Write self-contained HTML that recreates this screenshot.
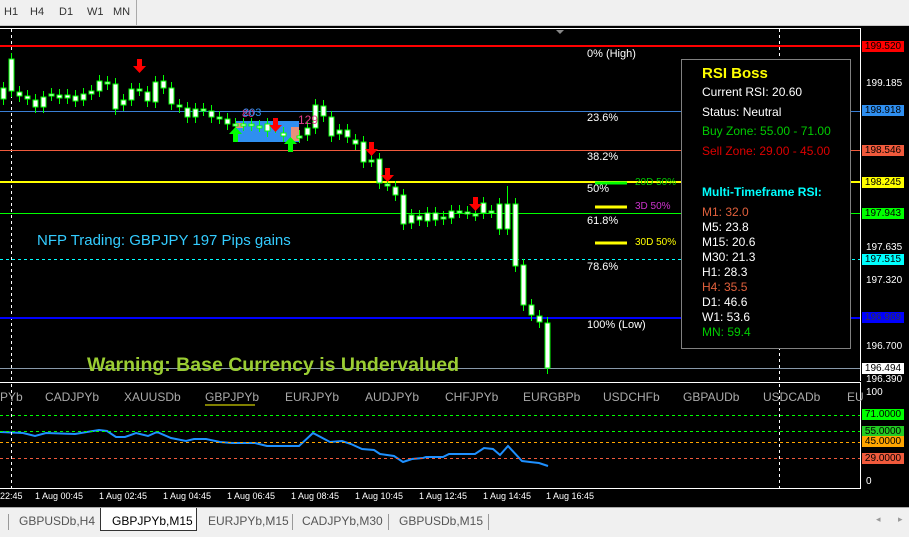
<!DOCTYPE html>
<html><head><meta charset="utf-8"><style>
*{margin:0;padding:0}
body{width:909px;height:536px;overflow:hidden;background:#000;font-family:"Liberation Sans",sans-serif;position:relative}
.tb{position:absolute;left:0;top:0;width:909px;height:25px;background:#f0f0f0;border-bottom:1px solid #c8c8c8}
.tb span{position:absolute;top:6px;font-size:11px;color:#333}
.t{position:absolute;white-space:nowrap;font-size:11px;color:#fff}
.pl{position:absolute;left:862px;width:42px;height:11px;font-size:10px;line-height:11px;text-align:center;color:#000}
.pa{position:absolute;left:866px;font-size:10px;color:#fff}
.box{position:absolute;left:681px;top:59px;width:168px;height:288px;border:1px solid #808080;background:#000}
.box div{position:absolute;left:20px;white-space:nowrap;font-size:12px;color:#fff}
.sym{position:absolute;top:390px;font-size:12px;color:#aaa}
.tm{position:absolute;top:491px;font-size:9px;color:#fff}
.tabs{position:absolute;left:0;top:507px;width:909px;height:29px;background:#f0f0f0;border-top:1px solid #aaa}
.tab{position:absolute;top:6px;font-size:12px;color:#555}
</style></head><body>
<div class="tb"><span style="left:4px">H1</span><span style="left:30px">H4</span><span style="left:59px">D1</span><span style="left:87px">W1</span><span style="left:113px">MN</span><div style="position:absolute;left:136px;top:0;width:1px;height:25px;background:#aaa"></div></div>
<svg width="909" height="536" style="position:absolute;left:0;top:0" xmlns="http://www.w3.org/2000/svg">
<line x1="0" y1="28.5" x2="861" y2="28.5" stroke="#fff"/>
<line x1="860.5" y1="28" x2="860.5" y2="381" stroke="#fff"/>
<line x1="11.5" y1="29" x2="11.5" y2="381" stroke="#fff" stroke-dasharray="3,3"/>
<line x1="779.5" y1="29" x2="779.5" y2="381" stroke="#fff" stroke-dasharray="3,3"/>
<polygon points="556,30 564,30 560,34" fill="#888"/>
<line x1="0" y1="46" x2="860" y2="46" stroke="#f00" stroke-width="2"/>
<line x1="0" y1="111.5" x2="860" y2="111.5" stroke="#3a7fd5"/>
<line x1="0" y1="150.5" x2="860" y2="150.5" stroke="#f05a3c"/>
<line x1="0" y1="182" x2="860" y2="182" stroke="#ff0" stroke-width="2"/>
<line x1="0" y1="213.5" x2="860" y2="213.5" stroke="#0f0"/>
<line x1="0" y1="259.5" x2="860" y2="259.5" stroke="#0ff" stroke-dasharray="3,3"/>
<line x1="0" y1="318" x2="860" y2="318" stroke="#00f" stroke-width="2"/>
<line x1="0" y1="368.5" x2="860" y2="368.5" stroke="#8899aa"/>
<line x1="595" y1="183" x2="627" y2="183" stroke="#0f0" stroke-width="3"/>
<line x1="595" y1="207" x2="627" y2="207" stroke="#ff0" stroke-width="3"/>
<line x1="595" y1="243" x2="627" y2="243" stroke="#ff0" stroke-width="3"/>
<rect x="235" y="121" width="64" height="21" fill="#2f8ff0"/>
<rect x="236" y="123" width="8" height="5" fill="#e8907a"/>
<rect x="291" y="127" width="8" height="14" fill="#e8907a"/>
<g stroke="#0f0" fill="#fff" id="c"></g>
<g id="ar"></g>
<polyline fill="none" stroke="#1e90ff" stroke-width="2" points="0,432 23,433 35,436 46,433 75,434 99,430 107,431 116,437 125,437 136,433 148,436 157,432 171,438 186,441 194,439 206,439 220,442 232,443 255,443 267,446 278,446 299,446 313,433 330,442 342,441 351,444 362,449 374,450 380,454 394,456 403,462 412,459 423,458 426,457 443,457 449,454 475,454 484,448 493,449 500,455 508,446 522,461 530,462 539,463 548,466"/>
<line x1="0" y1="382.5" x2="861" y2="382.5" stroke="#fff"/>
<line x1="860.5" y1="382" x2="860.5" y2="488" stroke="#fff"/>
<line x1="0" y1="488.5" x2="861" y2="488.5" stroke="#fff"/>
<line x1="11.5" y1="384" x2="11.5" y2="488" stroke="#fff" stroke-dasharray="3,3"/>
<line x1="779.5" y1="384" x2="779.5" y2="488" stroke="#fff" stroke-dasharray="3,3"/>
<line x1="0" y1="415.5" x2="860" y2="415.5" stroke="#0f0" stroke-dasharray="3,3"/>
<line x1="0" y1="431.5" x2="860" y2="431.5" stroke="#0f0" stroke-dasharray="3,3"/>
<line x1="0" y1="442.5" x2="860" y2="442.5" stroke="#ffa500" stroke-dasharray="3,3"/>
<line x1="0" y1="458.5" x2="860" y2="458.5" stroke="#f05a3c" stroke-dasharray="3,3"/>
<line x1="205" y1="405" x2="255" y2="405" stroke="#ff0"/>
</svg>
<script>
var d=[[3,88,99],[11,59,91],[19,92,96],[27,96,99],[35,100,107],[43,97,107],[51,94,95],[59,95,98],[67,95,98],[75,96,101],[83,94,100],[91,91,94],[99,81,91],[107,82,84],[115,84,109],[123,100,105],[131,89,100],[139,89,90],[147,92,101],[155,82,102],[163,81,88],[171,88,104],[179,105,107],[187,108,117],[195,109,117],[203,109,110],[211,111,117],[219,117,118],[227,119,124],[235,124,125],[243,124,125],[251,124,125],[259,126,126],[267,124,131],[275,126,127],[283,133,136],[299,136,137],[307,128,135],[315,105,128],[323,106,116],[331,117,136],[339,130,134],[347,130,137],[355,140,144],[363,142,162],[371,160,161],[379,159,183],[387,184,185],[395,187,195],[403,195,224],[411,215,223],[419,216,220],[427,213,221],[435,213,220],[443,217,219],[451,211,218],[459,211,212],[467,212,213],[475,214,215],[483,203,213],[491,211,212],[499,204,229],[507,204,229],[515,204,266],[523,265,305],[531,305,315],[539,316,322],[547,323,368]];
var s='';d.forEach(function(c){var hi=c[1]-6,lo=c[2]+6;if(c[0]==507)hi=186;s+='<line x1="'+(c[0]+.5)+'" y1="'+hi+'" x2="'+(c[0]+.5)+'" y2="'+lo+'"/><rect x="'+(c[0]-2)+'" y="'+c[1]+'" width="5" height="'+Math.max(2,c[2]-c[1])+'"/>';});
document.getElementById('c').innerHTML=s;
var a='';[[139,59],[275,118],[371,142],[387,168],[475,197]].forEach(function(p){var x=p[0],y=p[1];a+='<path d="M'+(x-2)+' '+y+'h5v7h4l-6.5 7-6.5-7h4z" fill="#f00"/>';});
[[235,127],[290,137]].forEach(function(p){var x=p[0],y=p[1];a+='<path d="M'+(x+.5)+' '+y+'l6.5 7h-4v8h-5v-8h-4z" fill="#0f0"/>';});
document.getElementById('ar').innerHTML=a;
</script>
<div class="t" style="left:242px;top:108px;color:#e03c8c;font-size:11px">80</div>
<div class="t" style="left:243px;top:107px;color:#2f8ff0;font-size:11px">203</div>
<div class="t" style="left:298px;top:113px;color:#e03c8c;font-size:12px">129</div>
<div class="t" style="left:587px;top:48px">0% (High)</div>
<div class="t" style="left:587px;top:112px">23.6%</div>
<div class="t" style="left:587px;top:151px">38.2%</div>
<div class="t" style="left:587px;top:183px">50%</div>
<div class="t" style="left:587px;top:215px">61.8%</div>
<div class="t" style="left:587px;top:261px">78.6%</div>
<div class="t" style="left:587px;top:319px">100% (Low)</div>
<div class="t" style="left:635px;top:177px;color:#0c0;font-size:10px">20D 50%</div>
<div class="t" style="left:635px;top:201px;color:#c3c;font-size:10px">3D 50%</div>
<div class="t" style="left:635px;top:237px;color:#ff0;font-size:10px">30D 50%</div>
<div class="t" style="left:37px;top:232px;color:#33ccff;font-size:15px">NFP Trading: GBPJPY 197 Pips gains</div>
<div class="t" style="left:87px;top:354px;color:#9acd32;font-size:19.5px;font-weight:bold">Warning: Base Currency is Undervalued</div>
<div class="box">
<div style="top:5px;color:#ff0;font-size:15px;font-weight:bold">RSI Boss</div>
<div style="top:25px">Current RSI: 20.60</div>
<div style="top:45px">Status: Neutral</div>
<div style="top:64px;color:#0c0">Buy Zone: 55.00 - 71.00</div>
<div style="top:84px;color:#d00">Sell Zone: 29.00 - 45.00</div>
<div style="top:125px;color:#0ff;font-weight:bold">Multi-Timeframe RSI:</div>
<div style="top:145px;color:#e0603c">M1:  32.0</div>
<div style="top:160px">M5:  23.8</div>
<div style="top:175px">M15: 20.6</div>
<div style="top:190px">M30: 21.3</div>
<div style="top:205px">H1:  28.3</div>
<div style="top:220px;color:#e0603c">H4:  35.5</div>
<div style="top:235px">D1:  46.6</div>
<div style="top:250px">W1:  53.6</div>
<div style="top:265px;color:#0c0">MN:  59.4</div>
</div>
<div class="pl" style="top:41px;background:#f00">199.520</div>
<div class="pa" style="top:78px">199.185</div>
<div class="pl" style="top:105px;background:#2f8ff0">198.918</div>
<div class="pl" style="top:145px;background:#f05a3c">198.546</div>
<div class="pl" style="top:177px;background:#ff0">198.245</div>
<div class="pl" style="top:208px;background:#0f0">197.943</div>
<div class="pa" style="top:242px">197.635</div>
<div class="pl" style="top:254px;background:#0ff">197.515</div>
<div class="pa" style="top:275px">197.320</div>
<div class="pl" style="top:312px;background:#00f;color:#334">196.969</div>
<div class="pa" style="top:341px">196.700</div>
<div class="pl" style="top:363px;background:#fff">196.494</div>
<div class="pa" style="top:374px">196.390</div>
<div class="pa" style="top:387px">100</div>
<div class="pl" style="top:409px;background:#0f0">71.0000</div>
<div class="pl" style="top:426px;background:#2c2">55.0000</div>
<div class="pl" style="top:436px;background:#ffa500">45.0000</div>
<div class="pl" style="top:453px;background:#f05a3c">29.0000</div>
<div class="pa" style="top:476px">0</div>
<div class="sym" style="left:0">PYb</div><div class="sym" style="left:45px">CADJPYb</div><div class="sym" style="left:124px">XAUUSDb</div><div class="sym" style="left:205px">GBPJPYb</div><div class="sym" style="left:285px">EURJPYb</div><div class="sym" style="left:365px">AUDJPYb</div><div class="sym" style="left:445px">CHFJPYb</div><div class="sym" style="left:523px">EURGBPb</div><div class="sym" style="left:603px">USDCHFb</div><div class="sym" style="left:683px">GBPAUDb</div><div class="sym" style="left:763px">USDCADb</div><div class="sym" style="left:847px">EU</div>
<div class="tm" style="left:0">22:45</div><div class="tm" style="left:35px">1 Aug 00:45</div><div class="tm" style="left:99px">1 Aug 02:45</div><div class="tm" style="left:163px">1 Aug 04:45</div><div class="tm" style="left:227px">1 Aug 06:45</div><div class="tm" style="left:291px">1 Aug 08:45</div><div class="tm" style="left:355px">1 Aug 10:45</div><div class="tm" style="left:419px">1 Aug 12:45</div><div class="tm" style="left:483px">1 Aug 14:45</div><div class="tm" style="left:546px">1 Aug 16:45</div>
<div class="tabs">
<div style="position:absolute;left:8px;top:6px;width:1px;height:16px;background:#999"></div>
<div class="tab" style="left:19px">GBPUSDb,H4</div>
<div style="position:absolute;left:100px;top:0;width:95px;height:22px;background:#fff;border:1px solid #333;border-top:none"></div>
<div class="tab" style="left:112px;color:#000">GBPJPYb,M15</div>
<div class="tab" style="left:208px">EURJPYb,M15</div>
<div style="position:absolute;left:292px;top:6px;width:1px;height:16px;background:#999"></div>
<div class="tab" style="left:302px">CADJPYb,M30</div>
<div style="position:absolute;left:388px;top:6px;width:1px;height:16px;background:#999"></div>
<div class="tab" style="left:399px">GBPUSDb,M15</div>
<div style="position:absolute;left:488px;top:6px;width:1px;height:16px;background:#999"></div>
<div class="tab" style="left:876px;font-size:9px;color:#999">◂</div><div class="tab" style="left:898px;font-size:9px;color:#999">▸</div>
</div>
</body></html>
